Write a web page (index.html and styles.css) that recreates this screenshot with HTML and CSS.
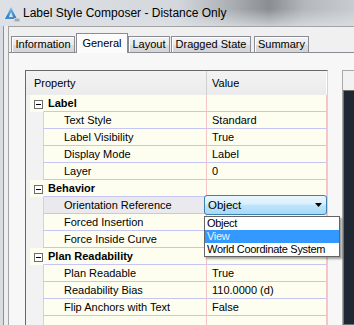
FILE: index.html
```html
<!DOCTYPE html>
<html lang="en">
<head>
    <meta charset="UTF-8">
    <title>Label Style Composer - Distance Only</title>
    <link rel="stylesheet" href="styles.css">
</head>
<body>

<div class="window">
  <div class="titlebar">
    <svg class="app-icon" width="16" height="16" viewBox="0 0 16 16">
      <defs>
        <linearGradient id="ab" x1="0" y1="0" x2="0" y2="1">
          <stop offset="0" stop-color="#7cc4f2"/>
          <stop offset="1" stop-color="#1f6fb8"/>
        </linearGradient>
      </defs>
      <path d="M7 1 L13 13 L10 13 L7 6 L4 13 L1 13 Z" fill="url(#ab)"/>
      <path d="M3 11 L11 11 L12 13 L2 13 Z" fill="#3a8fd6"/>
      <rect x="10" y="12" width="6" height="4" fill="#c9ccd0"/>
      <rect x="11" y="13.5" width="4" height="1" fill="#7d8186"/>
    </svg>
    <span class="title">Label Style Composer - Distance Only</span>
  </div>

  <div class="frame">
    <div class="frame-edge"></div>
    <div class="client">

      <div class="tabs">
        <div class="tab tab-info">Information</div>
        <div class="tab tab-general active">General</div>
        <div class="tab tab-layout">Layout</div>
        <div class="tab tab-dragged">Dragged State</div>
        <div class="tab tab-summary">Summary</div>
      </div>

      <div class="tab-panel">
        <div class="grid">
          <div class="grid-head">
            <div class="head-name">Property</div>
            <div class="head-value">Value</div>
          </div>

          <div class="row cat">
            <div class="gutter"><span class="toggle"></span></div>
            <div class="name">Label</div>
            <div class="value"></div>
          </div>
          <div class="row">
            <div class="gutter"></div>
            <div class="name">Text Style</div>
            <div class="value">Standard</div>
          </div>
          <div class="row">
            <div class="gutter"></div>
            <div class="name">Label Visibility</div>
            <div class="value">True</div>
          </div>
          <div class="row">
            <div class="gutter"></div>
            <div class="name">Display Mode</div>
            <div class="value">Label</div>
          </div>
          <div class="row">
            <div class="gutter"></div>
            <div class="name">Layer</div>
            <div class="value">0</div>
          </div>

          <div class="row cat">
            <div class="gutter"><span class="toggle"></span></div>
            <div class="name">Behavior</div>
            <div class="value"></div>
          </div>
          <div class="row selected">
            <div class="gutter"></div>
            <div class="name">Orientation Reference</div>
            <div class="value">
              <div class="combo">
                <span>Object</span>
                <svg class="combo-arrow" width="7" height="4" viewBox="0 0 7 4"><path d="M0 0 H7 L3.5 4 Z" fill="#000"/></svg>
              </div>
              <ul class="combo-list">
                <li>Object</li>
                <li class="hot">View</li>
                <li>World Coordinate System</li>
              </ul>
            </div>
          </div>
          <div class="row">
            <div class="gutter"></div>
            <div class="name">Forced Insertion</div>
            <div class="value"></div>
          </div>
          <div class="row">
            <div class="gutter"></div>
            <div class="name">Force Inside Curve</div>
            <div class="value"></div>
          </div>

          <div class="row cat">
            <div class="gutter"><span class="toggle"></span></div>
            <div class="name">Plan Readability</div>
            <div class="value"></div>
          </div>
          <div class="row">
            <div class="gutter"></div>
            <div class="name">Plan Readable</div>
            <div class="value">True</div>
          </div>
          <div class="row">
            <div class="gutter"></div>
            <div class="name">Readability Bias</div>
            <div class="value">110.0000 (d)</div>
          </div>
          <div class="row">
            <div class="gutter"></div>
            <div class="name">Flip Anchors with Text</div>
            <div class="value">False</div>
          </div>
          <div class="row filler">
            <div class="gutter"></div>
            <div class="name"></div>
            <div class="value"></div>
          </div>
        </div>

        <div class="preview">
          <div class="preview-head"></div>
          <div class="preview-view"></div>
        </div>
      </div>

    </div>
  </div>
</div>

</body>
</html>
```

FILE: styles.css
```css
* {
    box-sizing: border-box;
}

body {
    margin: 0;
    font-family: "Liberation Sans", Arial, sans-serif;
    font-size: 11px;
    color: #000;
    background: #f0f0f0;
}

.window {
    width: 354px;
    height: 325px;
    overflow: hidden;
    display: flex;
    flex-direction: column;
}

/* title bar */
.titlebar {
    height: 26px;
    flex: none;
    display: flex;
    align-items: center;
    padding-left: 4px;
    background:
        linear-gradient(rgba(255,255,255,0) 35%, rgba(222,226,230,0.75) 100%),
        linear-gradient(to right, #dde1e6 0%, #d4d8dd 50%, #a9adb2 66%, #8a8e93 76%, #b4b8bc 86%, #c8ccd0 100%);
}

.app-icon {
    flex: none;
    margin-top: 1px;
}

.title {
    margin-left: 3px;
    font-size: 12px;
    color: #000;
}

/* window frame */
.frame {
    flex: 1;
    display: flex;
    min-height: 0;
}

.frame-edge {
    width: 8px;
    flex: none;
    background: linear-gradient(to right, #d9dde1 3px, #8c9095 3px, #8c9095 4px, #eceef0 4px);
}

.client {
    flex: 1;
    display: flex;
    flex-direction: column;
    background: #f0f0f0;
    border-top: 1px solid #a3a3a3;
    border-left: 1px solid #a3a3a3;
    min-width: 0;
}

/* tabs */
.tabs {
    height: 25px;
    flex: none;
    display: flex;
    align-items: flex-end;
    padding-left: 2px;
}

.tab {
    height: 16px;
    line-height: 15px;
    text-align: center;
    border: 1px solid #898c95;
    border-bottom: none;
    background: linear-gradient(#f2f2f2 0%, #ebebeb 50%, #dddddd 51%, #d4d4d4 100%);
    box-shadow: inset 1px 1px 0 #fff;
    white-space: nowrap;
}

.tab.active {
    height: 20px;
    line-height: 19px;
    margin-bottom: -1px;
    background: #fcfcfc;
    position: relative;
    z-index: 1;
}

.tab-info    { width: 64px; }
.tab-general { width: 52px; margin-left: 1px; }
.tab-layout  { width: 42px; }
.tab-dragged { width: 80px; margin-left: 1px; }
.tab-summary { width: 55px; margin-left: 3px; }

.tab-panel {
    flex: 1;
    display: flex;
    align-items: flex-start;
    gap: 14px;
    padding: 17px 0 0 16px;
    border-top: 1px solid #898c95;
    background: #f7f7f7;
    min-height: 0;
}

/* property grid */
.grid {
    width: 303px;
    flex: none;
    border-top: 1px solid #696969;
    border-left: 1px solid #696969;
    border-right: 1px solid #d4d4d4;
    background: #f0f0f0;
}

.grid-head {
    display: grid;
    grid-template-columns: 180px 1fr;
    height: 24px;
    line-height: 24px;
    background: linear-gradient(#f3f3f3, #ebebeb);
}

.head-name {
    padding-left: 8px;
}

.head-value {
    padding-left: 5px;
    border-left: 1px solid #d0d0d0;
    border-right: 1px solid #fff;
}

.row {
    display: grid;
    grid-template-columns: 17px 163px 1fr;
    height: 17px;
    line-height: 16px;
}

.gutter {
    background: #f2f2f2;
}

.name,
.value {
    background: #fefef0;
    border-bottom: 1px solid #c6c6f6;
    white-space: nowrap;
}

.name {
    padding-left: 20px;
    border-left: 1px solid #f6c4c4;
}

.value {
    position: relative;
    padding-left: 5px;
    border-left: 1px solid #f6c4c4;
    border-right: 1px solid #f6c4c4;
}

.cat .gutter {
    background: linear-gradient(to right, #f2f2f2 4px, #fefef0 4px);
}

.cat .name {
    font-weight: bold;
    padding-left: 4px;
    border-left-color: #fefef0;
}

.toggle {
    display: block;
    width: 9px;
    height: 9px;
    margin: 5px 0 0 8px;
    border: 1px solid #6d6d6d;
    background: #fff linear-gradient(#000, #000) no-repeat center / 5px 1px;
}

.selected .name {
    background: #eaeaee;
}

.filler {
    height: 20px;
}

.filler .name,
.filler .value {
    border-bottom: none;
}

/* dropdown editor */
.combo {
    position: absolute;
    left: -3px;
    top: -2px;
    width: 123px;
    height: 20px;
    display: flex;
    align-items: center;
    justify-content: space-between;
    padding: 0 4px 0 3px;
    border: 1px solid #3c7fb1;
    border-radius: 3px;
    font-size: 11.5px;
    background: linear-gradient(#eaf6fd 0%, #d9f0fc 45%, #bee6fd 50%, #a7d9f5 100%);
    z-index: 2;
}

.combo-list {
    position: absolute;
    left: -3px;
    top: 19px;
    width: 136px;
    margin: 0;
    padding: 0;
    list-style: none;
    border: 1px solid #646464;
    background: #fff;
    font-size: 11px;
    letter-spacing: -0.3px;
    line-height: 13px;
    box-shadow: 2px 2px 2px rgba(0, 0, 0, 0.35);
    z-index: 3;
}

.combo-list li {
    height: 13px;
    padding-left: 2px;
}

.combo-list .hot {
    background: #3399ff;
    color: #e6f2ff;
}

/* style preview */
.preview {
    flex: none;
    width: 20px;
    align-self: stretch;
    border-top: 1px solid #a8a8a8;
    border-left: 1px solid #a8a8a8;
    background: #f2f2f2;
    display: flex;
    flex-direction: column;
}

.preview-head {
    height: 19px;
    flex: none;
}

.preview-view {
    flex: 1;
    border: 1px solid #707070;
    background: #1f2832;
}
```
